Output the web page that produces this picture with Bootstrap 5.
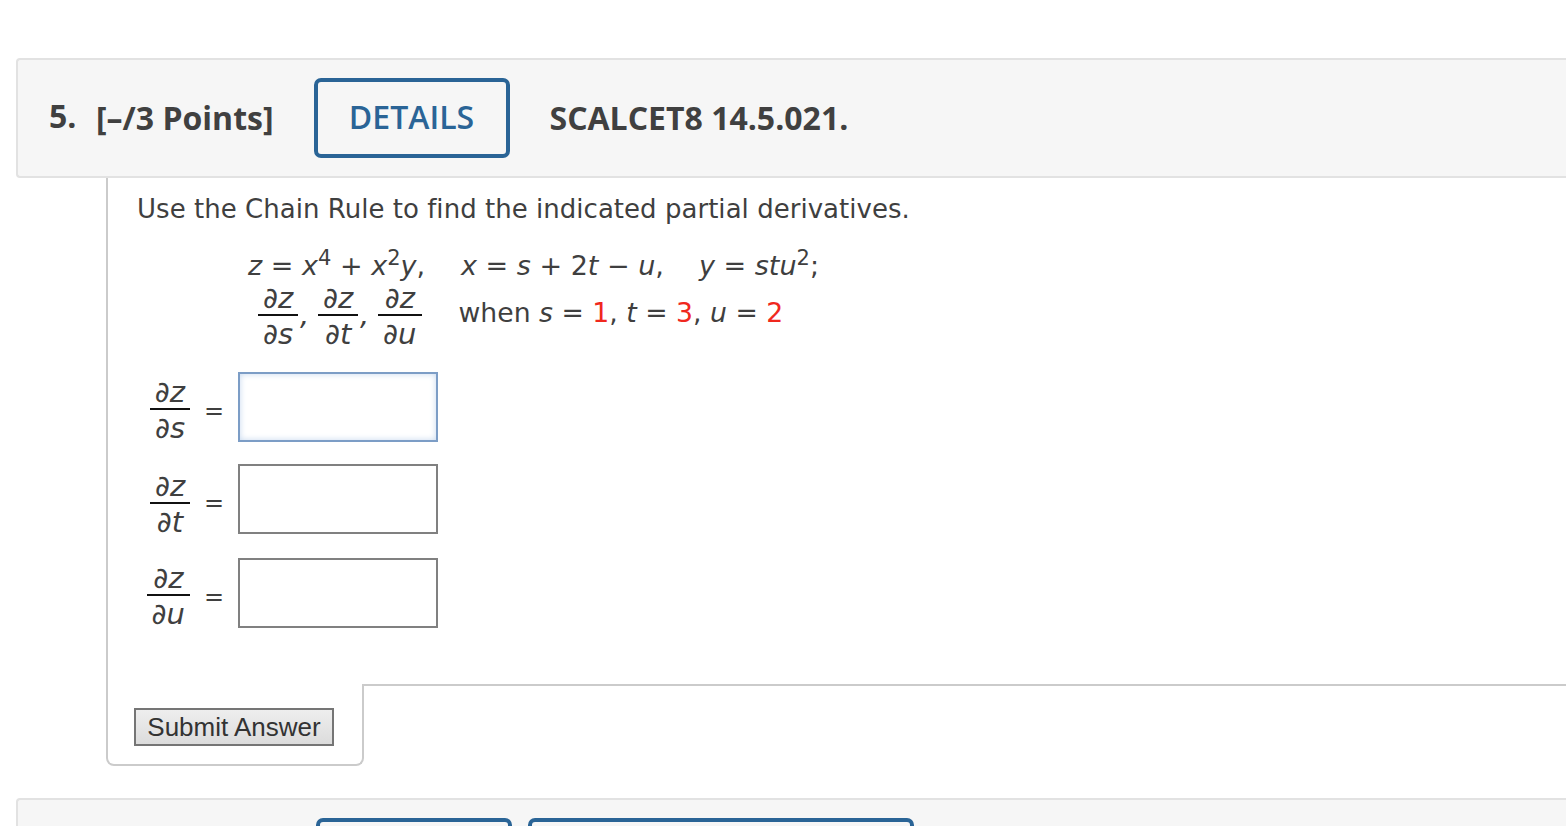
<!DOCTYPE html>
<html lang="en">
<head>
  <meta charset="UTF-8">
  <title>SCALCET8 14.5.021</title>
  <link rel="stylesheet" href="https://cdn.jsdelivr.net/npm/bootstrap@5.3.0/dist/css/bootstrap.min.css">
  <style>
    html, body { height: 100%; overflow: hidden; background: #fff; }
    body { padding-top: 58px; color: #3f3f3f; font-family: "DejaVu Sans", sans-serif; font-size: 26px; line-height: 1; }
    .qhead { margin-left: 16px; height: 120px; background: #f6f6f6; border: 2px solid #e2e2e2; border-right: 0; border-radius: 4px 0 0 4px; font-family: "Open Sans", sans-serif; font-weight: 700; font-size: 32px; color: #404040; padding-left: 31px; }
    .qnum { width: 47px; margin-top: -4px; }
    .details-btn { width: 196px; height: 80px; border: 4px solid #2a6496; border-radius: 7px; color: #2a6496; font-weight: 600; font-size: 32px; background: transparent; margin: 0 40px; padding: 0 0 2px; }
    .qmain { margin-left: 106px; height: 507px; border-left: 2px solid #cbcbcb; padding-left: 29px; padding-top: 17px; }
    .intro { height: 28px; line-height: 28px; white-space: nowrap; letter-spacing: .03px; }
    .m { font-style: italic; }
    .red { color: #f0281e; }
    .eqrow1 { margin-left: 111px; margin-top: 29px; height: 34px; white-space: pre; font-size: 27px; }
    .eqrow1 sup { font-size: 21px; font-style: normal; top: -.46em; line-height: 0; }
    .seg-a { width: 213px; }
    .seg-b { width: 238px; }
    .eqrow2 { margin-left: 121px; margin-top: -5px; height: 66px; }
    .frac { display: inline-flex; flex-direction: column; align-items: stretch; min-width: 40px; text-align: center; font-style: italic; font-size: 29px; line-height: 32px; }
    .frac-top { border-bottom: 2px solid #111; height: 35px; padding-top: 1px; }
    .frac-bot { height: 34px; padding: 2px 5px 0; }
    .comma { width: 20px; padding-top: 20px; font-size: 29px; font-style: italic; text-align: left; padding-left: 2px; }
    .when { margin-left: 37px; padding-top: 19px; white-space: pre; font-size: 26.7px; }
    .ansrow { height: 68px; }
    .ansrow-2 { margin-top: 24px; }
    .ansrow-3 { margin-top: 26px; }
    .ans-frac { width: 53px; margin-top: 4px; }
    .ans-frac-low { margin-top: 8px; }
    .ans-eq { width: 48px; text-align: center; font-size: 24px; padding-top: 8px; }
    .ansbox { width: 200px; height: 70px; border: 2px solid #808080; background: #fff; }
    .ansbox-on { border-color: #7c9dc6; box-shadow: inset 0 0 6px #c6d8ee; }
    .answers { margin-top: 26px; }
    .qfoot { height: 81px; }
    .submit-box { margin-left: 106px; width: 258px; border: 2px solid #cbcbcb; border-top: 0; border-radius: 0 0 8px 8px; padding: 23px 0 0 26px; }
    .submit-btn { width: 200px; height: 38px; border: 2px solid #757575; background: linear-gradient(#eee, #dcdcdc); font-family: "Liberation Sans", sans-serif; font-size: 26px; line-height: 30px; color: #333; padding: 0; }
    .foot-line { border-top: 2px solid #cbcbcb; margin: -1px 0 0 -2px; }
    .qhead-next { margin: 32px 0 0 16px; height: 60px; background: #f6f6f6; border-top: 2px solid #e2e2e2; border-left: 2px solid #e2e2e2; border-radius: 4px 0 0 0; padding: 18px 0 0 298px; }
    .next-btn { height: 40px; border: 4px solid #2a6496; border-radius: 7px; background: transparent; }
    .next-a { width: 196px; }
    .next-b { width: 386px; margin-left: 16px; }
  </style>
</head>
<body>

  <div class="qhead d-flex align-items-center">
    <span class="qnum">5.</span>
    <span>[&#8211;/3 Points]</span>
    <button type="button" class="details-btn">DETAILS</button>
    <span>SCALCET8 14.5.021.</span>
  </div>

  <div class="qmain">
    <div class="intro">Use the Chain Rule to find the indicated partial derivatives.</div>

    <div class="eqrow1 d-flex">
      <span class="seg-a"><span class="m">z</span> = <span class="m">x</span><sup>4</sup> + <span class="m">x</span><sup>2</sup><span class="m">y</span>,</span>
      <span class="seg-b"><span class="m">x</span> = <span class="m">s</span> + 2<span class="m">t</span> &#8722; <span class="m">u</span>,</span>
      <span><span class="m">y</span> = <span class="m">stu</span><sup>2</sup>;</span>
    </div>

    <div class="eqrow2 d-flex">
      <span class="frac"><span class="frac-top">&#8706;z</span><span class="frac-bot">&#8706;s</span></span>
      <span class="comma">,</span>
      <span class="frac"><span class="frac-top">&#8706;z</span><span class="frac-bot">&#8706;t</span></span>
      <span class="comma">,</span>
      <span class="frac"><span class="frac-top">&#8706;z</span><span class="frac-bot">&#8706;u</span></span>
      <span class="when">when <span class="m">s</span> = <span class="red">1</span>, <span class="m">t</span> = <span class="red">3</span>, <span class="m">u</span> = <span class="red">2</span></span>
    </div>

    <div class="answers">
      <div class="ansrow d-flex align-items-center">
        <span class="ans-frac d-flex justify-content-end"><span class="frac"><span class="frac-top">&#8706;z</span><span class="frac-bot">&#8706;s</span></span></span>
        <span class="ans-eq">=</span>
        <input type="text" class="ansbox ansbox-on">
      </div>
      <div class="ansrow ansrow-2 d-flex align-items-center">
        <span class="ans-frac ans-frac-low d-flex justify-content-end"><span class="frac"><span class="frac-top">&#8706;z</span><span class="frac-bot">&#8706;t</span></span></span>
        <span class="ans-eq">=</span>
        <input type="text" class="ansbox">
      </div>
      <div class="ansrow ansrow-3 d-flex align-items-center">
        <span class="ans-frac d-flex justify-content-end"><span class="frac"><span class="frac-top">&#8706;z</span><span class="frac-bot">&#8706;u</span></span></span>
        <span class="ans-eq">=</span>
        <input type="text" class="ansbox">
      </div>
    </div>
  </div>

  <div class="qfoot d-flex">
    <div class="submit-box"><button type="button" class="submit-btn">Submit Answer</button></div>
    <div class="foot-line flex-grow-1"></div>
  </div>

  <div class="qhead-next d-flex">
    <button type="button" class="next-btn next-a"></button>
    <button type="button" class="next-btn next-b"></button>
  </div>

</body>
</html>
